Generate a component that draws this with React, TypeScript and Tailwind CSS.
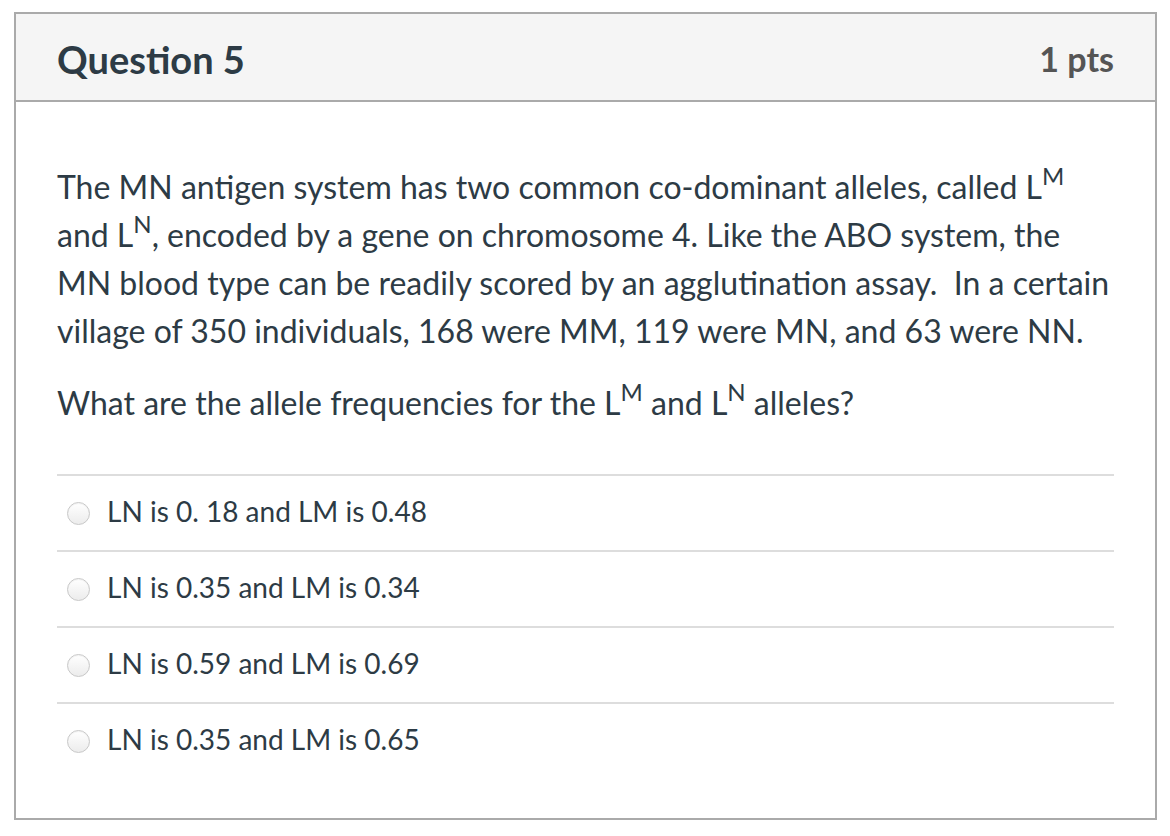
const options = [
  'LN is 0. 18 and LM is 0.48',
  'LN is 0.35 and LM is 0.34',
  'LN is 0.59 and LM is 0.69',
  'LN is 0.35 and LM is 0.65',
];

function Sup({ children }: { children: string }) {
  return <sup className="relative -top-[0.1em] align-super text-[0.75em] leading-none">{children}</sup>;
}

export default function App() {
  return (
    <div className="min-h-screen bg-white pt-3 pl-[14px] font-['Lato','Noto_Sans',sans-serif] text-[#2d3b45]">
      <div className="w-[1143px] border-2 border-[#aaaaaa]">
        <div className="flex h-[88px] items-center justify-between border-b-2 border-[#aaaaaa] bg-[#f5f5f5] px-[41px]">
          <h2 className="pt-[4px] text-[38px] font-bold leading-none">Question 5</h2>
          <span className="pt-[4px] text-[34px] font-bold leading-none text-[#555555]">1 pts</span>
        </div>
        <div className="px-[41px] pt-[61px] pb-[40px]">
          <p className="text-[32px] leading-[48px]">
            The MN antigen system has two common co-dominant alleles, called L<Sup>M</Sup> and L<Sup>N</Sup>,
            encoded by a gene on chromosome 4. Like the ABO system, the MN blood type can be readily scored by an
            agglutination assay.&nbsp; In a certain village of 350 individuals, 168 were MM, 119 were MN, and 63
            were NN.
          </p>
          <p className="mt-[24px] text-[32px] leading-[48px]">
            What are the allele frequencies for the L<Sup>M</Sup> and L<Sup>N</Sup> alleles?
          </p>
          <div className="mt-[47px]">
            {options.map((o) => (
              <label key={o} className="flex h-[76px] items-center border-t-2 border-[#dddddd] pl-[10px]">
                <span className="h-[23px] w-[23px] shrink-0 rounded-full border border-[#c8c8c8] bg-gradient-to-b from-white to-[#ececec] shadow-[inset_0_1px_1px_rgba(0,0,0,0.05)]" />
                <span className="ml-[17px] pb-[4px] text-[28px]">{o}</span>
              </label>
            ))}
          </div>
        </div>
      </div>
    </div>
  );
}
